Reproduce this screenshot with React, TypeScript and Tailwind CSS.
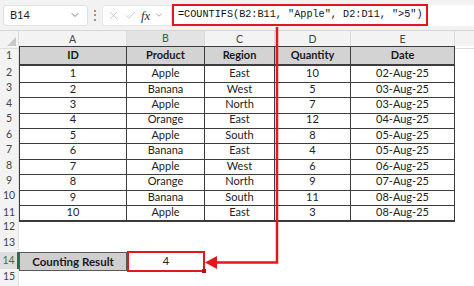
import { X, Check, ChevronDown } from "lucide-react";

const data: [number, string, string, number, string][] = [
  [1, "Apple", "East", 10, "02-Aug-25"],
  [2, "Banana", "West", 5, "03-Aug-25"],
  [3, "Apple", "North", 7, "03-Aug-25"],
  [4, "Orange", "East", 12, "04-Aug-25"],
  [5, "Apple", "South", 8, "05-Aug-25"],
  [6, "Banana", "East", 4, "05-Aug-25"],
  [7, "Apple", "West", 6, "06-Aug-25"],
  [8, "Orange", "North", 9, "07-Aug-25"],
  [9, "Banana", "South", 11, "08-Aug-25"],
  [10, "Apple", "East", 3, "08-Aug-25"],
];

const cols = "grid grid-cols-[19px_108px_78px_70px_76px_104px_1fr]";
const rowHead = "flex items-end justify-center pb-[1px] text-[10.5px] text-[#444] bg-[#f3f3f3] border-r border-b border-[#e0e0e0]";
const cell = "flex items-center justify-center border-r border-b border-[#3c3c3c] text-[11px] text-[#222]";

function FormulaBar() {
  return (
    <div className="h-[31px] flex items-center bg-[#f2f2f2] pl-[3px] border-b border-[#d6d6d6]">
      <div className="w-[85px] h-[21px] bg-white rounded-[3px] border border-[#e1e1e1] flex items-center justify-between px-[6px]">
        <span className="text-[11px] text-[#222]">B14</span>
        <ChevronDown size={12} strokeWidth={1.5} className="text-[#555]" />
      </div>
      <span className="w-[14px] text-center text-[12px] text-[#666] leading-none">⋮</span>
      <div className="w-[70px] h-[21px] bg-white rounded-l-[3px] border border-[#e6e6e6] flex items-center gap-[4px] px-[4px]">
        <X size={13} strokeWidth={1.2} className="text-[#b0b0b0]" />
        <Check size={13} strokeWidth={1.2} className="text-[#b0b0b0]" />
        <span className="font-['Liberation_Serif',serif] italic text-[13px] text-[#333] leading-none">fx</span>
        <ChevronDown size={10} strokeWidth={1.5} className="text-[#777]" />
      </div>
      <div className="flex-1 h-[21px] bg-white flex items-center">
        <div className="w-[256px] h-[22px] border-2 border-[#e2181f] flex items-center pl-[4px] font-['Liberation_Mono',monospace] text-[10.2px] text-[#111] whitespace-nowrap">
          =COUNTIFS(B2:B11, "Apple", D2:D11, "&gt;5")
        </div>
      </div>
    </div>
  );
}

export default function App() {
  return (
    <div className="relative w-[474px] h-[286px] overflow-hidden bg-white font-['Lato',sans-serif]">
      <FormulaBar />

      {/* column letters */}
      <div className={`${cols} h-[15px] bg-[#f3f3f3] text-[10.5px] text-[#444]`}>
        <div className="relative border-r border-b border-[#dcdcdc]">
          <div className="absolute right-[2px] bottom-[2px] w-0 h-0 border-l-[9px] border-l-transparent border-b-[9px] border-b-[#c8c8c8]" />
        </div>
        <div className="flex items-center justify-center border-r border-b border-[#dcdcdc]">A</div>
        <div className="flex items-center justify-center border-r border-b-2 border-b-[#217346] border-r-[#dcdcdc] bg-[#e3e3e3] text-[#1e6b40]">B</div>
        <div className="flex items-center justify-center border-r border-b border-[#dcdcdc]">C</div>
        <div className="flex items-center justify-center border-r border-b border-[#dcdcdc]">D</div>
        <div className="flex items-center justify-center border-r border-b border-[#dcdcdc]">E</div>
        <div className="border-b border-[#dcdcdc]" />
      </div>

      {/* header row */}
      <div className={`${cols} h-[19px]`}>
        <div className={rowHead}>1</div>
        {["ID", "Product", "Region", "Quantity", "Date"].map((h, i) => (
          <div
            key={h}
            className={`flex items-center justify-center bg-[#d3d3d3] font-bold text-[11px] text-[#1a1a1a] border-r border-b-2 border-[#3c3c3c] border-t ${i === 0 ? "border-l" : ""}`}
          >
            {h}
          </div>
        ))}
        <div />
      </div>

      {data.map((r, idx) => (
        <div key={idx} className={`${cols} h-[15.43px]`}>
          <div className={rowHead}>{idx + 2}</div>
          {r.map((v, i) => (
            <div key={i} className={`${cell} ${i === 0 ? "border-l" : ""} ${idx === data.length - 1 ? "border-b-2" : ""}`}>
              {v}
            </div>
          ))}
          <div />
        </div>
      ))}

      {[12, 13].map((n) => (
        <div key={n} className={`${cols} h-[16.2px]`}>
          <div className={rowHead}>{n}</div>
        </div>
      ))}

      <div className={`${cols} h-[17.3px]`}>
        <div className="flex items-end justify-center pb-[1px] text-[10.5px] text-[#3d6e52] bg-[#dedede] border-r-2 border-r-[#217346] border-b border-b-[#dcdcdc]">14</div>
        <div className="flex items-center justify-center bg-[#cfcfcf] border border-[#5a5a5a] font-bold text-[11.5px] text-[#1a1a1a]">
          Counting Result
        </div>
        <div className="relative flex items-center justify-center border-2 border-[#e2181f] text-[11px] text-[#222] -my-[1px]">
          4
          <div className="absolute -right-[3px] -bottom-[3px] w-[4px] h-[4px] bg-[#b01414]" />
        </div>
      </div>

      <div className={`${cols} h-[17px]`}>
        <div className={rowHead}>15</div>
      </div>

      {/* red connector arrow */}
      <svg className="absolute inset-0 pointer-events-none" width="474" height="286">
        <polyline points="277,27 277,262.5 214,262.5" fill="none" stroke="#e2181f" strokeWidth="2.5" />
        <polygon points="205,262.5 217,256 217,269" fill="#e2181f" />
      </svg>
    </div>
  );
}
